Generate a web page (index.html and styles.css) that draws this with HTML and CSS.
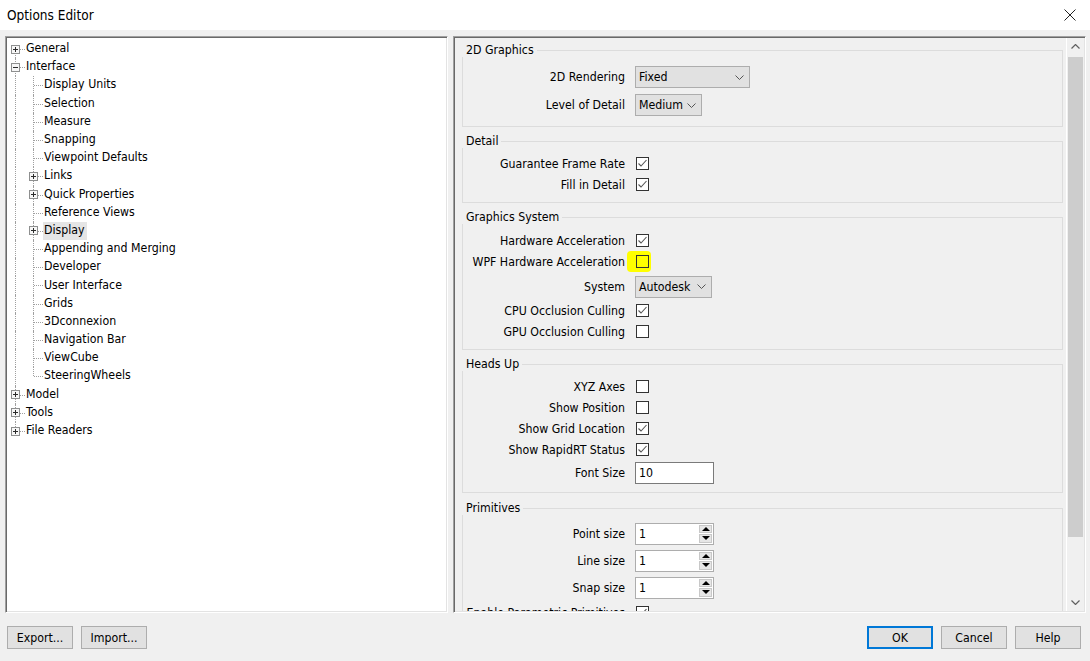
FILE: index.html
```html
<!DOCTYPE html>
<html lang="en">
<head>
  <meta charset="UTF-8">
  <title>Options Editor</title>
  <link rel="stylesheet" href="styles.css">
</head>
<body>
  <div class="window">
    <!-- title bar -->
    <header class="titlebar">
      <span class="title">Options Editor</span>
      <svg class="close" width="12" height="12" viewBox="0 0 12 12"><path d="M0.5 0.5l11 11M11.5 0.5l-11 11" stroke="#222" stroke-width="1"/></svg>
    </header>

    <main class="main">
      <!-- left: category tree -->
      <section class="tree-panel">
        <div class="tree">
          <div class="trow"><span class="cell vbot h"><svg class="exp" width="9" height="9" viewBox="0 0 9 9"><rect x=".5" y=".5" width="8" height="8" fill="#f7f7f7" stroke="#8e8f8f"/><path d="M2 4.5h5M4.5 2v5" stroke="#2b2b2b"/></svg></span><span class="lbl">General</span></div>
          <div class="trow"><span class="cell vfull h"><svg class="exp" width="9" height="9" viewBox="0 0 9 9"><rect x=".5" y=".5" width="8" height="8" fill="#f7f7f7" stroke="#8e8f8f"/><path d="M2 4.5h5" stroke="#2b2b2b"/></svg></span><span class="lbl">Interface</span></div>
          <div class="trow"><span class="cell vfull"></span><span class="cell vfull h"></span><span class="lbl">Display Units</span></div>
          <div class="trow"><span class="cell vfull"></span><span class="cell vfull h"></span><span class="lbl">Selection</span></div>
          <div class="trow"><span class="cell vfull"></span><span class="cell vfull h"></span><span class="lbl">Measure</span></div>
          <div class="trow"><span class="cell vfull"></span><span class="cell vfull h"></span><span class="lbl">Snapping</span></div>
          <div class="trow"><span class="cell vfull"></span><span class="cell vfull h"></span><span class="lbl">Viewpoint Defaults</span></div>
          <div class="trow"><span class="cell vfull"></span><span class="cell vfull h"><svg class="exp" width="9" height="9" viewBox="0 0 9 9"><rect x=".5" y=".5" width="8" height="8" fill="#f7f7f7" stroke="#8e8f8f"/><path d="M2 4.5h5M4.5 2v5" stroke="#2b2b2b"/></svg></span><span class="lbl">Links</span></div>
          <div class="trow"><span class="cell vfull"></span><span class="cell vfull h"><svg class="exp" width="9" height="9" viewBox="0 0 9 9"><rect x=".5" y=".5" width="8" height="8" fill="#f7f7f7" stroke="#8e8f8f"/><path d="M2 4.5h5M4.5 2v5" stroke="#2b2b2b"/></svg></span><span class="lbl">Quick Properties</span></div>
          <div class="trow"><span class="cell vfull"></span><span class="cell vfull h"></span><span class="lbl">Reference Views</span></div>
          <div class="trow"><span class="cell vfull"></span><span class="cell vfull h"><svg class="exp" width="9" height="9" viewBox="0 0 9 9"><rect x=".5" y=".5" width="8" height="8" fill="#f7f7f7" stroke="#8e8f8f"/><path d="M2 4.5h5M4.5 2v5" stroke="#2b2b2b"/></svg></span><span class="lbl selected">Display</span></div>
          <div class="trow"><span class="cell vfull"></span><span class="cell vfull h"></span><span class="lbl">Appending and Merging</span></div>
          <div class="trow"><span class="cell vfull"></span><span class="cell vfull h"></span><span class="lbl">Developer</span></div>
          <div class="trow"><span class="cell vfull"></span><span class="cell vfull h"></span><span class="lbl">User Interface</span></div>
          <div class="trow"><span class="cell vfull"></span><span class="cell vfull h"></span><span class="lbl">Grids</span></div>
          <div class="trow"><span class="cell vfull"></span><span class="cell vfull h"></span><span class="lbl">3Dconnexion</span></div>
          <div class="trow"><span class="cell vfull"></span><span class="cell vfull h"></span><span class="lbl">Navigation Bar</span></div>
          <div class="trow"><span class="cell vfull"></span><span class="cell vfull h"></span><span class="lbl">ViewCube</span></div>
          <div class="trow"><span class="cell vfull"></span><span class="cell vtop h"></span><span class="lbl">SteeringWheels</span></div>
          <div class="trow"><span class="cell vfull h"><svg class="exp" width="9" height="9" viewBox="0 0 9 9"><rect x=".5" y=".5" width="8" height="8" fill="#f7f7f7" stroke="#8e8f8f"/><path d="M2 4.5h5M4.5 2v5" stroke="#2b2b2b"/></svg></span><span class="lbl">Model</span></div>
          <div class="trow"><span class="cell vfull h"><svg class="exp" width="9" height="9" viewBox="0 0 9 9"><rect x=".5" y=".5" width="8" height="8" fill="#f7f7f7" stroke="#8e8f8f"/><path d="M2 4.5h5M4.5 2v5" stroke="#2b2b2b"/></svg></span><span class="lbl">Tools</span></div>
          <div class="trow"><span class="cell vtop h"><svg class="exp" width="9" height="9" viewBox="0 0 9 9"><rect x=".5" y=".5" width="8" height="8" fill="#f7f7f7" stroke="#8e8f8f"/><path d="M2 4.5h5M4.5 2v5" stroke="#2b2b2b"/></svg></span><span class="lbl">File Readers</span></div>
        </div>
      </section>

      <!-- right: option pages -->
      <section class="opt-panel">
        <div class="opt-content">
          <fieldset class="grp grp-2d">
            <legend>2D Graphics</legend>
            <div class="frow tall"><label>2D Rendering</label><div class="combo w-rendering"><span>Fixed</span><svg width="9" height="5" viewBox="0 0 9 5"><path d="M.5 .5l4 4 4-4" fill="none" stroke="#555"/></svg></div></div>
            <div class="frow tall"><label>Level of Detail</label><div class="combo w-lod"><span>Medium</span><svg width="9" height="5" viewBox="0 0 9 5"><path d="M.5 .5l4 4 4-4" fill="none" stroke="#555"/></svg></div></div>
          </fieldset>

          <fieldset class="grp">
            <legend>Detail</legend>
            <div class="frow"><label>Guarantee Frame Rate</label><span class="chk on"></span></div>
            <div class="frow"><label>Fill in Detail</label><span class="chk on"></span></div>
          </fieldset>

          <fieldset class="grp grp-sys">
            <legend>Graphics System</legend>
            <div class="frow"><label>Hardware Acceleration</label><span class="chk on"></span></div>
            <div class="frow"><label>WPF Hardware Acceleration</label><span class="mark"><span class="chk"></span></span></div>
            <div class="frow tall sys"><label>System</label><div class="combo w-system"><span>Autodesk</span><svg width="9" height="5" viewBox="0 0 9 5"><path d="M.5 .5l4 4 4-4" fill="none" stroke="#555"/></svg></div></div>
            <div class="frow"><label>CPU Occlusion Culling</label><span class="chk on"></span></div>
            <div class="frow"><label>GPU Occlusion Culling</label><span class="chk"></span></div>
          </fieldset>

          <fieldset class="grp grp-hud">
            <legend>Heads Up</legend>
            <div class="frow"><label>XYZ Axes</label><span class="chk"></span></div>
            <div class="frow"><label>Show Position</label><span class="chk"></span></div>
            <div class="frow"><label>Show Grid Location</label><span class="chk on"></span></div>
            <div class="frow"><label>Show RapidRT Status</label><span class="chk on"></span></div>
            <div class="frow mid"><label>Font Size</label><div class="field">10</div></div>
          </fieldset>

          <fieldset class="grp">
            <legend>Primitives</legend>
            <div class="frow spin-row"><label>Point size</label><div class="field spin"><span>1</span><span class="spin-btns"><i class="up"></i><i class="down"></i></span></div></div>
            <div class="frow spin-row"><label>Line size</label><div class="field spin"><span>1</span><span class="spin-btns"><i class="up"></i><i class="down"></i></span></div></div>
            <div class="frow spin-row"><label>Snap size</label><div class="field spin"><span>1</span><span class="spin-btns"><i class="up"></i><i class="down"></i></span></div></div>
            <div class="frow after-spin"><label>Enable Parametric Primitives</label><span class="chk on"></span></div>
          </fieldset>
        </div>

        <!-- vertical scrollbar -->
        <div class="vscroll">
          <div class="sb-arrow"><svg width="9" height="5" viewBox="0 0 9 5"><path d="M.5 4.5l4-4 4 4" fill="none" stroke="#606060" stroke-width="1.2"/></svg></div>
          <div class="sb-track"><div class="sb-thumb"></div></div>
          <div class="sb-arrow"><svg width="9" height="5" viewBox="0 0 9 5"><path d="M.5 .5l4 4 4-4" fill="none" stroke="#606060" stroke-width="1.2"/></svg></div>
        </div>
      </section>
    </main>

    <footer class="buttons">
      <div class="btn-group">
        <button class="btn">Export...</button>
        <button class="btn">Import...</button>
      </div>
      <div class="btn-group">
        <button class="btn default">OK</button>
        <button class="btn">Cancel</button>
        <button class="btn">Help</button>
      </div>
    </footer>
  </div>
</body>
</html>
```

FILE: styles.css
```css
:root {
  --face: #f0f0f0;
  --btn: #e1e1e1;
  --btn-border: #adadad;
  --frame-dark: #696969;
  --frame-mid: #a0a0a0;
  --grp-line: #dcdcdc;
  --dots: #a0a0a0;
  --accent: #0078d7;
}
html, body {
  margin: 0;
  padding: 0;
  background: var(--face);
  font-family: "DejaVu Sans Condensed", "DejaVu Sans", sans-serif;
  font-stretch: condensed;
  font-size: 12.25px;
  color: #000;
}
.window {
  width: 1090px;
  height: 661px;
  display: flex;
  flex-direction: column;
  overflow: hidden;
}

/* ---------- title bar ---------- */
.titlebar {
  height: 30px;
  flex: none;
  background: #fff;
  display: flex;
  align-items: center;
  justify-content: space-between;
  padding: 0 14px 0 7px;
}
.title { font-size: 13.5px; }

/* ---------- main split ---------- */
.main {
  height: 583px;
  box-sizing: border-box;
  flex: none;
  display: flex;
  gap: 5px;
  padding: 6px 4px 0 5px;
}
.tree-panel, .opt-panel {
  box-sizing: border-box;
  border: 1px solid;
  border-color: var(--frame-mid) #fff #fff var(--frame-mid);
  box-shadow: inset 1px 1px 0 var(--frame-dark), inset -1px -1px 0 #e3e3e3;
  overflow: hidden;
}
.tree-panel {
  width: 443px;
  background: #fff;
  padding: 3px 1px 1px;
}
.opt-panel {
  flex: 1;
  display: flex;
  padding: 1px;
}

/* ---------- tree ---------- */
.tree { display: flex; flex-direction: column; }
.trow {
  height: 18.2px;
  display: flex;
  align-items: center;
}
.cell {
  width: 18px;
  height: 100%;
  flex: none;
  position: relative;
  display: flex;
  align-items: center;
  justify-content: center;
}
.cell::before, .cell::after {
  content: "";
  position: absolute;
}
.cell.vfull::before { left: 8px; top: 0; bottom: 0; border-left: 1px dotted var(--dots); }
.cell.vtop::before { left: 8px; top: 0; height: 50%; border-left: 1px dotted var(--dots); }
.cell.vbot::before { left: 8px; top: 50%; bottom: 0; border-left: 1px dotted var(--dots); }
.cell.h::after { left: 9px; right: 0; top: 9px; border-top: 1px dotted var(--dots); }
.exp { position: relative; z-index: 1; margin-left: -1px; }
.lbl {
  padding: 1px 2px 2px 1px;
  white-space: nowrap;
  line-height: 15px;
}
.lbl.selected { background: #e5e5e5; }

/* ---------- option page ---------- */
.opt-content {
  flex: 1;
  padding: 5px 3px 0 7px;
  overflow: hidden;
}
.grp {
  margin: 0 0 7px;
  padding: 5px 0 7px;
  border: 1px solid var(--grp-line);
  border-radius: 0;
}
.grp-2d, .grp-sys { padding-top: 6px; }
.grp-hud { margin-bottom: 8px; }
.grp legend {
  padding: 0 3px 0 4px;
  margin-left: -1px;
  line-height: 14px;
}
.frow {
  display: grid;
  grid-template-columns: 162px max-content;
  column-gap: 10px;
  align-items: center;
  height: 21px;
}
.frow.tall { height: 28px; }
.frow.sys { height: 28px; padding-top: 1px; box-sizing: border-box; }
.frow.mid { height: 25px; }
.frow.spin-row { height: 27px; }
.frow.after-spin { margin-top: 1px; }
.frow label { text-align: right; white-space: nowrap; }

.chk {
  width: 13px;
  height: 13px;
  box-sizing: border-box;
  border: 1px solid #333;
  background: #fff;
  margin-left: 1px;
}
.chk.on {
  background: #fff url("data:image/svg+xml;utf8,<svg xmlns='http://www.w3.org/2000/svg' width='11' height='11'><path d='M1.5 5.5l2.5 2.5 5.5-6' fill='none' stroke='%23555' stroke-width='1.1'/></svg>") no-repeat center;
}
.mark {
  display: flex;
  align-items: center;
  width: 24px;
  height: 21px;
  margin-left: -8px;
  padding-left: 8px;
  box-sizing: border-box;
  background: #ffff00;
  border-radius: 4px;
}
.mark .chk { background: transparent; }

.combo {
  height: 22px;
  box-sizing: border-box;
  border: 1px solid var(--btn-border);
  background: var(--btn);
  display: flex;
  align-items: center;
  justify-content: space-between;
  padding: 0 5px 0 3px;
}
.w-rendering { width: 115px; }
.w-lod { width: 67px; }
.w-system { width: 77px; }

.field {
  width: 79px;
  height: 22px;
  box-sizing: border-box;
  border: 1px solid #7a7a7a;
  background: #fff;
  display: flex;
  align-items: center;
  padding-left: 3px;
}
.spin {
  justify-content: space-between;
  border-color: #adadad;
  padding-right: 1px;
}
.spin-btns {
  width: 13px;
  height: 18px;
  display: flex;
  flex-direction: column;
  gap: 1px;
}
.spin-btns i {
  flex: 1;
  background: #e6e6e6;
  border: 1px solid #c8c8c8;
  display: flex;
  align-items: center;
  justify-content: center;
}
.spin-btns i::before {
  content: "";
  border-left: 4px solid transparent;
  border-right: 4px solid transparent;
}
.spin-btns i.up::before { border-bottom: 4px solid #000; }
.spin-btns i.down::before { border-top: 4px solid #000; }

/* ---------- scrollbar ---------- */
.vscroll {
  width: 17px;
  flex: none;
  display: flex;
  flex-direction: column;
  background: #f0f0f0;
  border-left: 1px solid #fff;
}
.sb-arrow {
  height: 17px;
  display: flex;
  align-items: center;
  justify-content: center;
}
.sb-track {
  flex: 1;
  padding: 2px 1px 0;
}
.sb-thumb {
  height: 480px;
  background: #cdcdcd;
}

/* ---------- dialog buttons ---------- */
.buttons {
  flex: 1;
  display: flex;
  justify-content: space-between;
  align-items: flex-start;
  padding: 13px 9px 0 7px;
}
.btn-group { display: flex; gap: 8px; }
.btn {
  width: 66px;
  height: 23px;
  font: inherit;
  color: #000;
  background: var(--btn);
  border: 1px solid var(--btn-border);
  padding: 0;
}
.btn.default {
  border-color: var(--accent);
  box-shadow: inset 0 0 0 1px var(--accent);
}
```
